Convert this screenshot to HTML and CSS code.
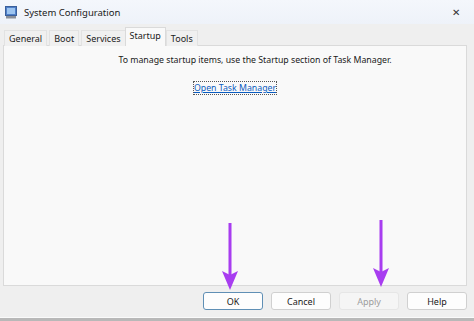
FILE: index.html
```html
<!DOCTYPE html>
<html lang="en">
<head>
    <meta charset="UTF-8">
    <title>System Configuration</title>
    <link rel="stylesheet" href="styles.css">
</head>
<body>
    <div class="window">
        <div class="titlebar">
            <svg class="app-icon" width="12" height="13" viewBox="0 0 12 13">
                <rect x="0.5" y="0.5" width="11" height="9" fill="#4f7fc8" stroke="#3a5f9a"/>
                <rect x="2" y="2" width="8" height="6" fill="#9cc4f0"/>
                <rect x="1" y="10" width="10" height="2.5" fill="#8a8f98"/>
            </svg>
            <span class="title">System Configuration</span>
            <span class="close">&#x2715;</span>
        </div>

        <div class="tabs">
            <div class="tab">General</div>
            <div class="tab">Boot</div>
            <div class="tab">Services</div>
            <div class="tab active">Startup</div>
            <div class="tab">Tools</div>
        </div>

        <div class="panel">
            <p class="message">To manage startup items, use the Startup section of Task Manager.</p>
            <a class="link">Open Task Manager</a>
        </div>

        <div class="buttons">
            <button class="btn default">OK</button>
            <button class="btn">Cancel</button>
            <button class="btn" disabled>Apply</button>
            <button class="btn">Help</button>
        </div>
        <div class="bottom-edge"></div>

        <!-- annotation arrows -->
        <svg class="arrow arrow-ok" width="18" height="68" viewBox="0 0 18 68">
            <line x1="9" y1="0" x2="9" y2="54" stroke="#a83df0" stroke-width="3" stroke-linecap="round"/>
            <path d="M1 48 L9 52 L17 48 L9 67 Z" fill="#a83df0"/>
        </svg>
        <svg class="arrow arrow-apply" width="18" height="68" viewBox="0 0 18 68">
            <line x1="9" y1="0" x2="9" y2="54" stroke="#a83df0" stroke-width="3" stroke-linecap="round"/>
            <path d="M1 48 L9 52 L17 48 L9 67 Z" fill="#a83df0"/>
        </svg>
    </div>
</body>
</html>
```

FILE: styles.css
```css
body {
    margin: 0;
    font-family: "Noto Sans", "Open Sans", sans-serif;
    font-size: 9px;
    color: #1a1a1a;
    background: #efefef;
}
.window {
    position: relative;
    width: 474px;
    height: 321px;
    display: flex;
    flex-direction: column;
    background: #efefef;
    overflow: hidden;
}
.titlebar {
    height: 24px;
    display: flex;
    align-items: center;
    padding: 0 0 0 5px;
    background: linear-gradient(#f4f7fc, #eef2f9);
    flex-shrink: 0;
}
.app-icon {
    margin-right: 7px;
}
.title {
    font-size: 9.5px;
    flex: 1;
}
.close {
    width: 22px;
    font-size: 10px;
    color: #333;
}
.tabs {
    display: flex;
    align-items: flex-end;
    height: 22px;
    padding: 0 0 0 4px;
    margin-bottom: -1px;
    position: relative;
    z-index: 1;
    flex-shrink: 0;
}
.tab {
    height: 15px;
    line-height: 15px;
    padding: 0 4px;
    margin-right: 2px;
    background: #f0f0f0;
    border: 1px solid #e2e2e2;
    border-bottom: none;
}
.tab.active {
    height: 18px;
    line-height: 16px;
    background: #f9f9f9;
    border-color: #dadada;
    margin: 0 0 0 -3px;
    padding: 0 4px;
}
.tab.active + .tab {
    margin-left: 0;
}
.panel {
    flex: 1;
    margin: 0 7px 0 3px;
    background: #f9f9f9;
    border: 1px solid #dadada;
    text-align: center;
}
.message {
    margin: 8px 0 15px;
    padding-left: 40px;
    font-size: 8.75px;
}
.link {
    color: #0b5cc0;
    font-size: 8.75px;
    text-decoration: underline;
    outline: 1px dotted #555;
    outline-offset: 0;
}
.buttons {
    display: flex;
    justify-content: flex-end;
    gap: 8px;
    padding: 6px 7px 5px 0;
    flex-shrink: 0;
}
.btn {
    width: 60px;
    height: 18px;
    padding: 0;
    font-family: inherit;
    font-size: 9px;
    color: #1a1a1a;
    background: #fdfdfd;
    border: 1px solid #d0d0d0;
    border-radius: 3px;
}
.btn.default {
    border-color: #5f8fb5;
}
.btn:disabled {
    color: #9d9d9d;
    background: #f5f5f5;
    border-color: #e6e6e6;
}
.bottom-edge {
    height: 3px;
    margin-top: 2px;
    background: #b8b8b8;
    border-top: 1px solid #fafafa;
}
.arrow {
    position: absolute;
}
.arrow-ok {
    left: 221px;
    top: 223px;
}
.arrow-apply {
    left: 372px;
    top: 220px;
}
```
